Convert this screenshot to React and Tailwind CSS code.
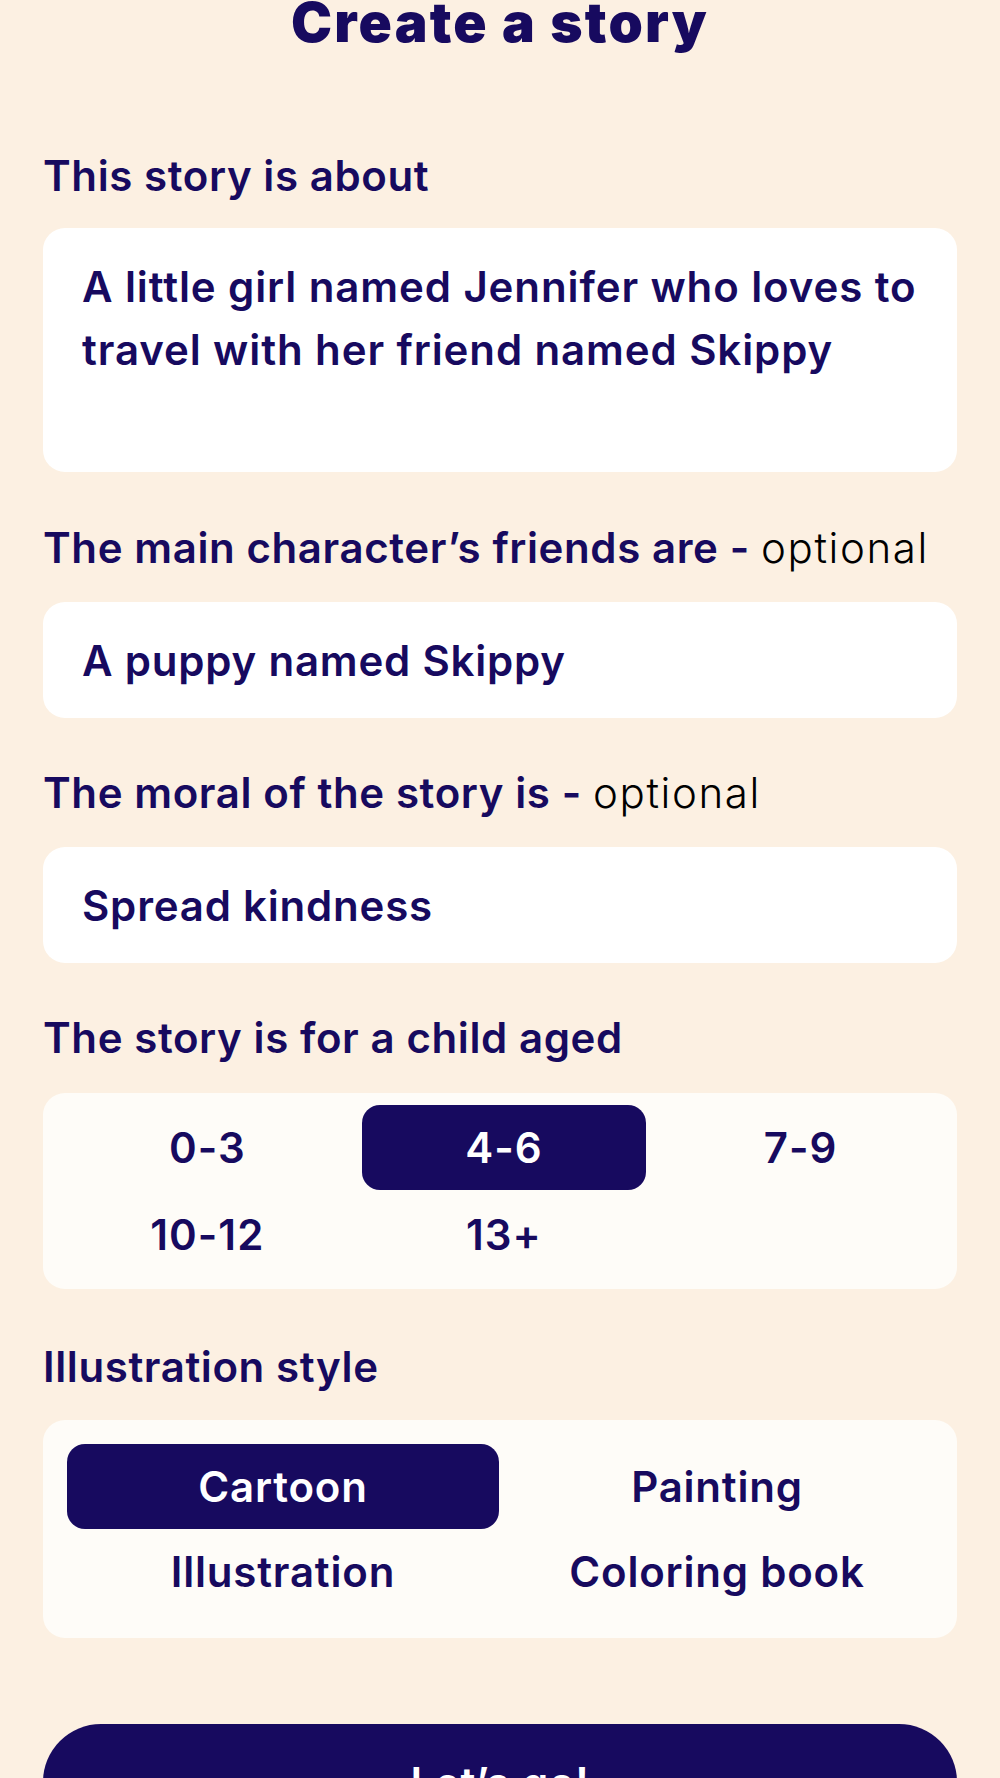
import { useState } from 'react'

const ages = ['0-3', '4-6', '7-9', '10-12', '13+']
const styles = ['Cartoon', 'Painting', 'Illustration', 'Coloring book']

const Label = ({ children, optional, className = '' }) => (
  <div className={`text-[42px] leading-[52px] font-semibold text-[#170a5f] tracking-[0.6px] ${className}`}>
    {children}
    {optional && (
      <>
        {' - '}
        <span className="font-light text-black tracking-[1.6px]">optional</span>
      </>
    )}
  </div>
)

export default function App() {
  const [age, setAge] = useState('4-6')
  const [style, setStyle] = useState('Cartoon')

  return (
    <div
      className="min-h-screen bg-[#fcf0e2] px-[43px] overflow-hidden"
      style={{ fontFamily: 'Inter, "Noto Sans", sans-serif' }}
    >
      {/* Heading */}
      <h1 className="mt-[-5px] text-center text-[55px] leading-[54px] font-black text-[#170a5f] tracking-[2.2px]">
        Create a story
      </h1>

      {/* Subject */}
      <Label className="mt-[101px]">This story is about</Label>
      <div className="mt-[26px] h-[244px] rounded-[22px] bg-white pl-[39px] pr-[24px] pt-[27px] text-[42px] leading-[63px] font-semibold text-[#170a5f] tracking-[0.9px]">
        A little girl named Jennifer who loves to travel with her friend named Skippy
      </div>

      {/* Friends */}
      <Label optional className="mt-[50px]">The main character’s friends are</Label>
      <div className="mt-[28px] flex h-[116px] items-center rounded-[22px] bg-white px-[39px] text-[42px] leading-[63px] font-semibold text-[#170a5f] tracking-[0.8px]">
        A puppy named Skippy
      </div>

      {/* Moral */}
      <Label optional className="mt-[49px]">The moral of the story is</Label>
      <div className="mt-[28px] flex h-[116px] items-center rounded-[22px] bg-white px-[39px] text-[42px] leading-[63px] font-semibold text-[#170a5f] tracking-[0.8px]">
        Spread kindness
      </div>

      {/* Age */}
      <Label className="mt-[49px]">The story is for a child aged</Label>
      <div className="mt-[29px] grid grid-cols-3 gap-x-[12px] gap-y-[2px] rounded-[22px] bg-[#fefcf8] pl-[22px] pr-[14px] py-[12px]">
        {ages.map((a) => (
          <button
            key={a}
            onClick={() => setAge(a)}
            className={`flex h-[85px] items-center justify-center rounded-[18px] text-[42px] font-semibold tracking-[1px] ${
              age === a ? 'bg-[#170a5f] text-white' : 'text-[#170a5f]'
            }`}
          >
            {a}
          </button>
        ))}
      </div>

      {/* Illustration style */}
      <Label className="mt-[52px]">Illustration style</Label>
      <div className="mt-[27px] grid grid-cols-2 gap-x-[2px] rounded-[22px] bg-[#fefcf8] p-[24px]">
        {styles.map((s) => (
          <button
            key={s}
            onClick={() => setStyle(s)}
            className={`flex h-[85px] items-center justify-center rounded-[18px] text-[42px] font-semibold tracking-[0.8px] ${
              style === s ? 'bg-[#170a5f] text-white' : 'text-[#170a5f]'
            }`}
          >
            {s}
          </button>
        ))}
      </div>

      <button className="mt-[86px] flex h-[116px] w-full items-center justify-center rounded-full bg-[#170a5f] text-[42px] font-semibold text-white tracking-[0.8px]">
        Let’s go!
      </button>
    </div>
  )
}
